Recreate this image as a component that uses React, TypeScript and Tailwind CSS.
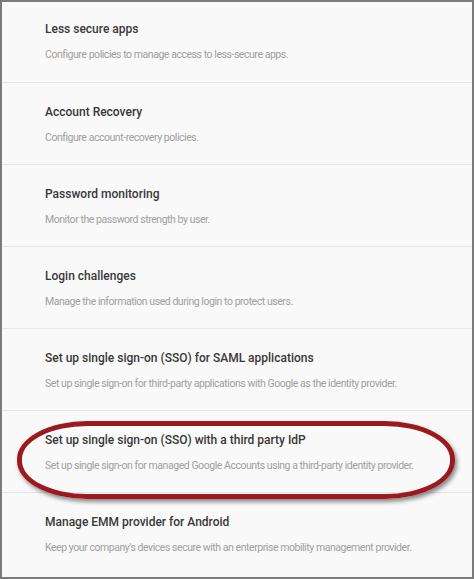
import React from "react";

const rows = [
  ["Less secure apps", "Configure policies to manage access to less-secure apps."],
  ["Account Recovery", "Configure account-recovery policies."],
  ["Password monitoring", "Monitor the password strength by user."],
  ["Login challenges", "Manage the information used during login to protect users."],
  ["Set up single sign-on (SSO) for SAML applications", "Set up single sign-on for third-party applications with Google as the identity provider."],
  ["Set up single sign-on (SSO) with a third party IdP", "Set up single sign-on for managed Google Accounts using a third-party identity provider."],
  ["Manage EMM provider for Android", "Keep your company's devices secure with an enterprise mobility management provider."],
];

export default function App() {
  return (
    <div
      className="relative w-[474px] h-[579px] border-2 border-[#7b7b7b] bg-[#f9f9f9] flex flex-col overflow-hidden"
      style={{ fontFamily: "Roboto, 'Noto Sans', sans-serif" }}
    >
      {rows.map(([t, d], i) => (
        <div
          key={i}
          className={
            (i === 0 ? "h-[81px] pt-[19px] " : i === rows.length - 1 ? "flex-1 pt-[21px] " : "h-[82px] pt-[21px] ") +
            (i < rows.length - 1 ? "border-b border-[#e6e6e6] " : "") +
            "pl-[43px] shrink-0 whitespace-nowrap"
          }
        >
          <div className="text-[12px] leading-[16px] font-medium text-[#383838]">{t}</div>
          <div className="mt-[10px] text-[10.5px] tracking-[-0.45px] leading-[16px] text-[#a0a0a0]">{d}</div>
        </div>
      ))}
      <div className="absolute left-[15px] top-[419px] w-[438px] h-[78px] border-[5px] border-[#9a1a20] rounded-[70px/38px] shadow-[2px_3px_4px_rgba(0,0,0,0.45)]" />
    </div>
  );
}
